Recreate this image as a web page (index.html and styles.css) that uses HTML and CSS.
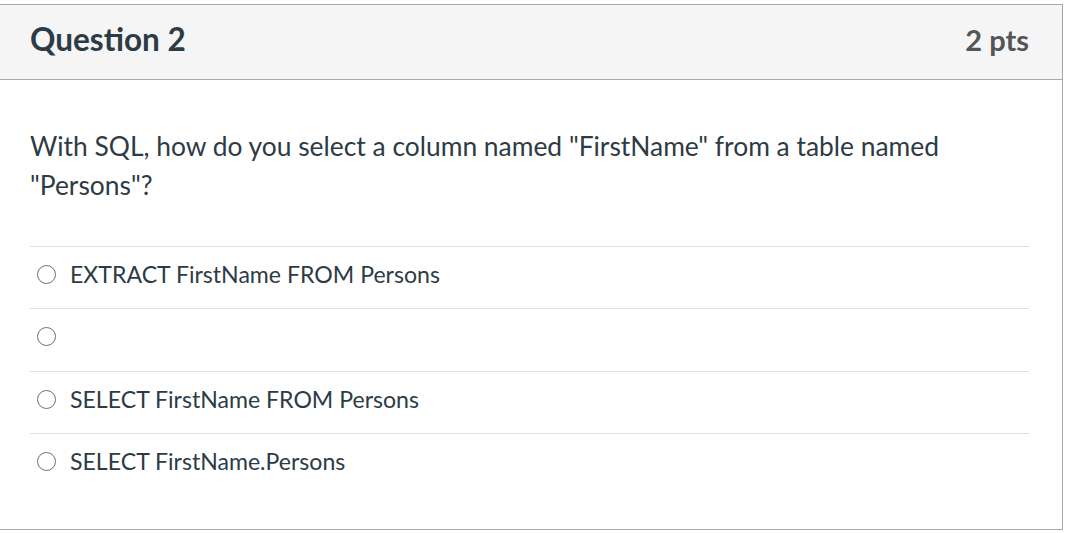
FILE: index.html
```html
<!DOCTYPE html>
<html>
<head>
<meta charset="utf-8">
<link rel="stylesheet" href="styles.css">
</head>
<body>
<div class="question">
  <div class="q-header">
    <h2 class="q-title">Question 2</h2>
    <span class="q-points">2 pts</span>
  </div>
  <div class="q-body">
    <p class="q-text">With SQL, how do you select a column named "FirstName" from a table named "Persons"?</p>
    <div class="answers">
      <label class="answer"><span class="radio"></span><span class="a-text">EXTRACT FirstName FROM Persons</span></label>
      <label class="answer"><span class="radio"></span><span class="a-text"></span></label>
      <label class="answer"><span class="radio"></span><span class="a-text">SELECT FirstName FROM Persons</span></label>
      <label class="answer"><span class="radio"></span><span class="a-text">SELECT FirstName.Persons</span></label>
    </div>
  </div>
</div>
</body>
</html>
```
FILE: styles.css
```css
html, body {
  margin: 0;
  padding: 0;
  background: #ffffff;
}
body {
  font-family: Lato, "Open Sans", "Liberation Sans", sans-serif;
  color: #2d3b45;
}
.question {
  margin: 4px 0 0 -1px;
  width: 1064px;
  height: 526px;
  border: 1px solid #a8a8a8;
  box-sizing: border-box;
  background: #fff;
}
.q-header {
  height: 75px;
  box-sizing: border-box;
  background: #f5f5f5;
  border-bottom: 1px solid #a8a8a8;
  display: flex;
  align-items: center;
  justify-content: space-between;
  padding: 0 33px 6px 30px;
}
.q-title {
  margin: 0;
  font-size: 31.5px;
  font-weight: 700;
  color: #2d3b45;
}
.q-points {
  font-size: 29px;
  font-weight: 700;
  color: #555;
}
.q-body {
  padding: 0 33px 0 30px;
}
.q-text {
  margin: 47px 0 41px;
  font-size: 26.4px;
  line-height: 39px;
  color: #2d3b45;
}
.answer {
  display: flex;
  align-items: flex-start;
  height: 62px;
  box-sizing: border-box;
  padding-top: 13px;
  border-top: 1px solid #dedede;
}
.answer:nth-child(even) {
  height: 63px;
}
.radio {
  width: 19px;
  height: 19px;
  box-sizing: border-box;
  border: 1.5px solid #707070;
  border-radius: 50%;
  margin: 5px 14px 0 7px;
  flex: none;
}
.a-text {
  font-size: 23.1px;
  line-height: 28px;
  color: #2d3b45;
}
```
